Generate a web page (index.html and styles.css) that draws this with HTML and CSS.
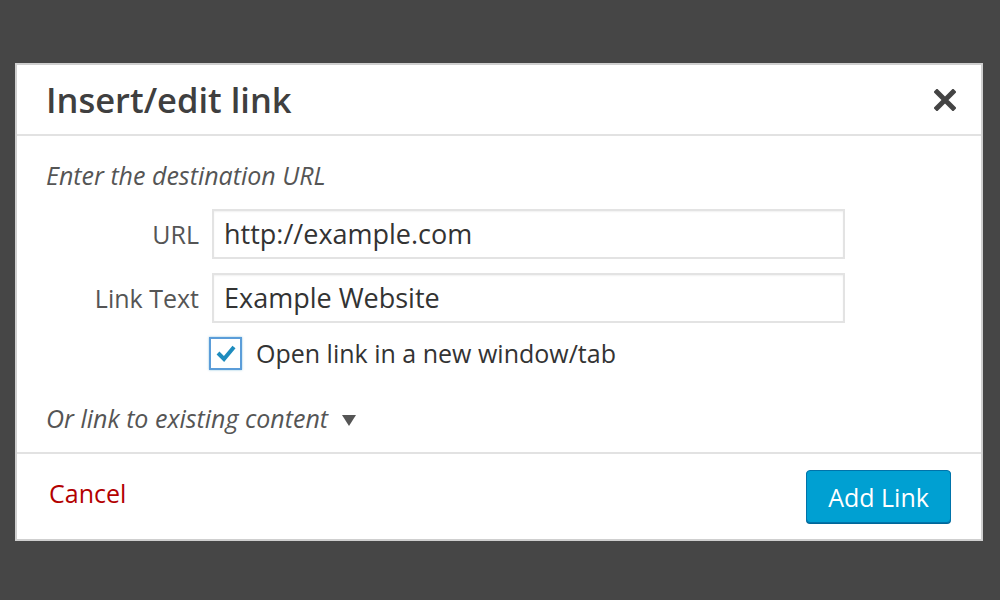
FILE: index.html
```html
<!DOCTYPE html>
<html>
<head>
<meta charset="utf-8">
<link rel="stylesheet" href="styles.css">
</head>
<body>
<div class="dialog">
  <div class="header">
    <h1 class="title">Insert/edit link</h1>
    <span class="close" aria-label="Close">
      <svg width="22" height="22" viewBox="0 0 22 22"><path d="M3 3 L19 19 M19 3 L3 19" stroke="#444" stroke-width="5" stroke-linecap="square"/></svg>
    </span>
  </div>
  <div class="content">
    <p class="hint">Enter the destination URL</p>
    <div class="form">
      <label class="label">URL</label>
      <div class="input">http://example.com</div>
      <label class="label">Link Text</label>
      <div class="input">Example Website</div>
      <span></span>
      <div class="check-row">
        <span class="checkbox">
          <svg width="22" height="18" viewBox="0 0 22 18"><path d="M3 9 L9 15 L19 3" fill="none" stroke="#1e8cbe" stroke-width="4"/></svg>
        </span>
        <span class="check-label">Open link in a new window/tab</span>
      </div>
    </div>
    <p class="toggle">Or link to existing content <span class="arrow"></span></p>
  </div>
  <div class="footer">
    <a class="cancel">Cancel</a>
    <button class="primary">Add Link</button>
  </div>
</div>
</body>
</html>
```

FILE: styles.css
```css
* { box-sizing: border-box; }
html, body { margin: 0; padding: 0; }
body {
  background: #464646;
  width: 1000px;
  height: 600px;
  overflow: hidden;
  font-family: "Open Sans", "Liberation Sans", sans-serif;
  padding-top: 63px;
  padding-left: 15px;
}
.dialog {
  width: 968px;
  height: 478px;
  background: #fff;
  border: 2px solid #cfcfcf;
  display: flex;
  flex-direction: column;
}
.header {
  height: 71px;
  border-bottom: 2px solid #e2e2e2;
  display: flex;
  align-items: center;
  justify-content: space-between;
  padding: 0 23px 0 29px;
}
.title {
  margin: 0;
  font-size: 34.5px;
  font-weight: 600;
  color: #3f3f3f;
  letter-spacing: 0;
}
.close { display: flex; margin-right: 2px; }
.content {
  padding: 24px 0 0 29px;
  flex: 1;
}
.hint {
  margin: 0;
  font-style: italic;
  font-size: 25px;
  line-height: 30px;
  color: #555;
}
.form {
  display: grid;
  grid-template-columns: 153px 633px;
  column-gap: 13px;
  row-gap: 14px;
  margin-top: 19px;
  align-items: center;
}
.label {
  text-align: right;
  font-size: 25px;
  color: #555;
}
.input {
  height: 50px;
  border: 2px solid #e3e3e3;
  box-shadow: inset 0 1px 2px rgba(0,0,0,0.06);
  padding: 0 10px;
  font-size: 27px;
  line-height: 46px;
  color: #333;
}
.check-row {
  display: flex;
  align-items: center;
  margin-left: -3px;
  margin-top: -1px;
}
.checkbox {
  width: 33px;
  height: 33px;
  border: 2px solid #5b9dd9;
  display: flex;
  align-items: center;
  justify-content: center;
  box-shadow: 0 0 2px rgba(30,140,190,0.5);
}
.check-label {
  margin-left: 14px;
  font-size: 25px;
  color: #333;
}
.toggle {
  margin: 33px 0 0;
  font-style: italic;
  font-size: 25px;
  line-height: 30px;
  color: #555;
  display: flex;
  align-items: center;
}
.arrow {
  display: inline-block;
  width: 0;
  height: 0;
  margin-left: 14px;
  margin-top: 4px;
  border-left: 7px solid transparent;
  border-right: 7px solid transparent;
  border-top: 11px solid #555;
}
.footer {
  height: 87px;
  border-top: 2px solid #e2e2e2;
  display: flex;
  align-items: flex-start;
  justify-content: space-between;
  padding: 16px 30px 0 32px;
}
.cancel {
  color: #b30000;
  font-size: 25px;
  line-height: 30px;
  margin-top: 8px;
}
.primary {
  width: 145px;
  height: 53px;
  background: #00a0d2;
  border: 1px solid #0073aa;
  border-radius: 4px;
  box-shadow: 0 1px 0 #006799;
  color: #fff;
  font-family: "Open Sans", "Liberation Sans", sans-serif;
  font-size: 25px;
  padding: 0;
}
```
